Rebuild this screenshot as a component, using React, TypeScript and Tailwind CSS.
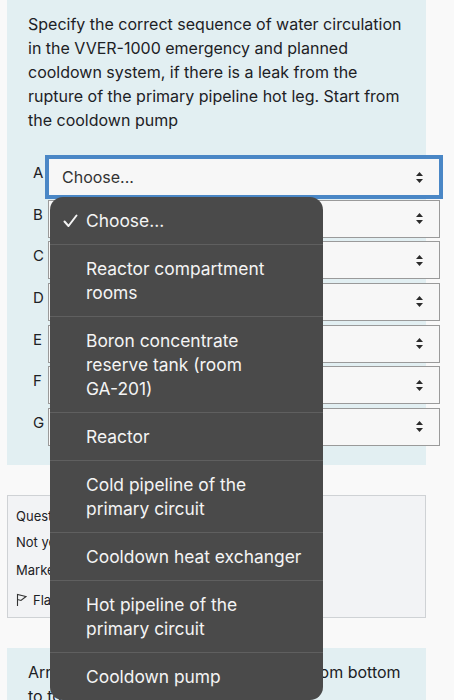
import React from 'react'

const labels = ['A', 'B', 'C', 'D', 'E', 'F', 'G']

const options: string[][] = [
  ['Reactor compartment', 'rooms'],
  ['Boron concentrate', 'reserve tank (room', 'GA-201)'],
  ['Reactor'],
  ['Cold pipeline of the', 'primary circuit'],
  ['Cooldown heat exchanger'],
  ['Hot pipeline of the', 'primary circuit'],
  ['Cooldown pump'],
]

function UpDown() {
  return (
    <svg width="9" height="13" viewBox="0 0 9 13" className="shrink-0">
      <path d="M4.5 1 L8 5 L1 5 Z" fill="#2b2b2b" />
      <path d="M4.5 12 L8 8 L1 8 Z" fill="#2b2b2b" />
    </svg>
  )
}

function SelectBox({ focused }: { focused?: boolean }) {
  return (
    <div
      className={
        focused
          ? 'flex h-[38px] w-[392px] shrink-0 items-center justify-between border border-[#4a87c6] bg-[#f7f7f7] pl-[13px] pr-[15px] outline outline-[3px] outline-[#4a87c6]'
          : 'flex h-[38px] w-[392px] shrink-0 items-center justify-between border border-[#9a9a9a] bg-[#f7f7f7] pl-[13px] pr-[15px]'
      }
    >
      <span className="text-[16px] text-[#333]">{focused ? 'Choose...' : ''}</span>
      <UpDown />
    </div>
  )
}

export default function App() {
  return (
    <div className="relative h-[700px] w-[454px] overflow-hidden bg-[#f9f9f9] font-['Inter',sans-serif] text-[#1d2125]">
      {/* Question */}
      <div className="ml-[7px] w-[419px] bg-[#e2eff2] px-[21px] pb-[19px] pt-3">
        <p className="text-[16px] leading-6">
          Specify the correct sequence of water circulation in the VVER-1000 emergency and planned cooldown
          system, if there is a leak from the rupture of the primary pipeline hot leg. Start from the cooldown pump
        </p>
        <div className="mt-[26px] flex flex-col gap-[3.67px]">
          {labels.map((l, i) => (
            <div key={l} className="flex items-start">
              <span className="mt-[3px] w-[20px] shrink-0 pl-[5px] text-[15px] leading-6">{l}</span>
              <SelectBox focused={i === 0} />
            </div>
          ))}
        </div>
      </div>

      {/* Info */}
      <div className="ml-[7px] mt-[30px] h-[123px] w-[419px] border border-[#cfd2d5] bg-[#f2f3f5] pl-[8px] pt-[10px] text-[13px] leading-5">
        <p>Question 5</p>
        <p className="mt-[6px]">Not yet answered</p>
        <p className="mt-[8px]">Marked out of 1.00</p>
        <p className="mt-[10px] flex items-center gap-[6px]">
          <svg width="11" height="14" viewBox="0 0 11 14">
            <path d="M1.5 13 V1.5 L10 3.5 L5 7.5 L1.5 6.5" fill="none" stroke="#333" strokeWidth="1.1" />
          </svg>
          Flag question
        </p>
      </div>

      {/* Next info */}
      <div className="ml-[7px] mt-[30px] w-[419px] bg-[#e2eff2] px-[21px] pt-3 pb-4 text-[16px] leading-6">
        <span className="block whitespace-nowrap">Arrange all the elements in the order from bottom</span>
        <span className="block whitespace-nowrap">to top</span>
      </div>

      {/* Native dropdown menu */}
      <div className="absolute left-[50px] top-[197px] w-[273px] overflow-hidden rounded-[13px] bg-[#4a4a4a] text-[17.4px] text-[#f4f4f4]">
        <div className="relative py-[11.5px] pl-[36px] leading-6">
          <svg width="15" height="14" viewBox="0 0 15 14" className="absolute left-[13px] top-[17px]">
            <path d="M1.5 7.5 L5.5 12 L13.5 1.5" fill="none" stroke="#f4f4f4" strokeWidth="2" strokeLinecap="round" strokeLinejoin="round" />
          </svg>
          Choose...
        </div>
        {options.map((lines, i) => (
          <div key={i} className="border-t border-[#5f5f5f] py-[11.5px] pl-[36px] leading-6">
            {lines.map((t, j) => (
              <span key={j} className="block whitespace-nowrap">
                {t}
              </span>
            ))}
          </div>
        ))}
      </div>
    </div>
  )
}
